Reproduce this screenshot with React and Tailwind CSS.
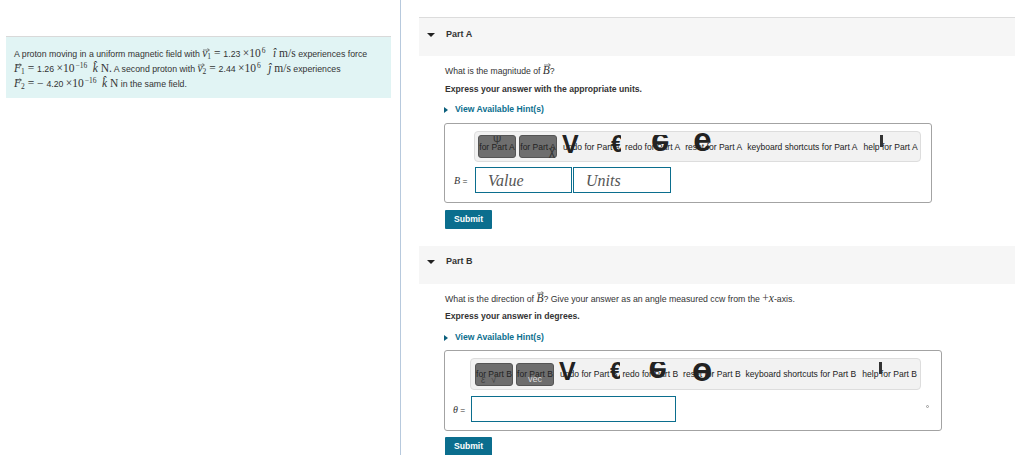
import React from 'react';

const serif = 'font-["Liberation_Serif",serif] italic';

function Vec({ children, arrow = 'top-[2px]' }) {
  return (
    <span className="relative inline-block font-['Liberation_Serif',serif] italic text-[11.5px]">
      <svg className={`absolute left-[1px] ${arrow}`} width="7" height="4" viewBox="0 0 7 4">
        <path d="M0 2H6M4.5 0.5L6.5 2L4.5 3.5" fill="none" stroke="#555" strokeWidth="0.7" />
      </svg>
      {children}
    </span>
  );
}

function M({ children, className = '' }) {
  return <span className={`font-['Liberation_Serif',serif] text-[11.5px] ${className}`}>{children}</span>;
}

function Sub({ children }) {
  return <span className="relative top-[2px] font-['Liberation_Serif',serif] text-[7.5px]">{children}</span>;
}

function Exp({ children }) {
  return <span className="relative top-[-4px] ml-px mr-[3px] font-['Liberation_Serif',serif] text-[7.5px]">{children}</span>;
}

function Caret() {
  return <span className="block w-0 h-0 border-x-[4px] border-x-transparent border-t-[4px] border-t-[#222]" />;
}

function HintLink({ className }) {
  return (
    <div className={`flex items-center gap-[7px] ml-[25px] text-[8.65px] font-bold text-[#0b6e8e] ${className}`}>
      <span className="w-0 h-0 border-y-[3.5px] border-y-transparent border-l-[4px] border-l-[#0b5f7c]" />
      View Available Hint(s)
    </div>
  );
}

function GrayBtn({ children, overlay }) {
  return (
    <span className="relative flex items-center justify-center w-[38px] h-[23px] rounded-[3px] border border-[#555] bg-[#6e6e6e] text-[#222] text-[8.5px] whitespace-nowrap">
      {children}
      {overlay}
    </span>
  );
}

function BigGlyph({ children, className }) {
  return <span className={`absolute font-['Liberation_Sans',sans-serif] font-bold text-[#222] leading-none ${className}`}>{children}</span>;
}

function Toolbar({ part, isB }) {
  const f = `for Part ${part}`;
  return (
    <div className={`flex items-center rounded-[4px] border border-[#ddd] bg-[#f2f2f2] text-[8.55px] leading-[12px] text-[#222] whitespace-nowrap ${isB ? 'ml-[25px] w-[451px] h-[32px] pl-[4px]' : 'ml-[29px] w-[447px] h-[31px] pl-[3px]'}`}>
      <GrayBtn
        overlay={isB
          ? <span className="absolute left-[5px] top-[10px] text-[10px] text-[#444] italic">ε &nbsp;√</span>
          : <span className="absolute left-[14px] top-[-1px] text-[10px] text-[#333]">Ψ</span>}
      >
        {f}
      </GrayBtn>
      <span className="w-[3px]" />
      <GrayBtn
        overlay={isB
          ? <span className="absolute left-[11px] top-[9px] text-[9px] text-[#ddd]">vec</span>
          : <span className="absolute right-[1px] bottom-0 text-[12px] text-[#333] leading-none">χ</span>}
      >
        {f}
      </GrayBtn>
      <span className="relative ml-[6px]">
        <BigGlyph className="left-[-1px] top-[-9px] text-[25px]">V</BigGlyph>
        <BigGlyph className={`${isB ? 'left-[50px]' : 'left-[48px]'} top-[-9px] w-[10px] h-[22px] overflow-hidden text-[24px]`}>€</BigGlyph>
        undo {f}
      </span>
      <span className="relative ml-[5px]">
        <BigGlyph className="left-[26px] top-[-13px] text-[33px] -scale-y-100 [clip-path:inset(0_0_7px_0)]">e</BigGlyph>
        redo {f}
      </span>
      <span className="relative ml-[5px]">
        <BigGlyph className={isB ? 'left-[9px] top-[-15px] text-[33px]' : 'left-[8px] top-[-18px] text-[33px]'}>{isB ? 'ө' : 'e'}</BigGlyph>
        reset {f}
      </span>
      <span className="ml-[5px]">keyboard shortcuts {f}</span>
      <span className="relative ml-[6px]">
        <span className="absolute left-[17px] top-[-6px] w-[3px] h-[12px] bg-[#333]" />
        help {f}
      </span>
    </div>
  );
}

function Submit({ className }) {
  return (
    <button className={`block ml-[26px] w-[47px] h-[19px] rounded-[1px] bg-[#0b6e8e] text-white text-[8.65px] font-bold text-center ${className}`}>
      Submit
    </button>
  );
}

function PartHead({ name, pad }) {
  return (
    <div className={`flex items-start h-[38px] bg-[#f6f6f6] pl-[8px] gap-[11px] font-bold text-[9px] text-[#333] ${pad}`}>
      <span className="mt-[5px]"><Caret /></span>
      <span>Part {name}</span>
    </div>
  );
}

export default function App() {
  return (
    <div className="flex w-[1015px] h-[455px] overflow-hidden bg-white font-['Liberation_Sans',sans-serif] text-[#333]">
      <div className="w-[401px] shrink-0 border-r border-[#b7c9dd] pt-[36px] pl-[6px] pr-[9px]">
        <div className="h-[62px] border-t border-[#d9d9d9] bg-[#e1f4f4] pl-[8px] pt-[9px] text-[8.75px] text-[#333]">
          <div className="h-[15px] leading-[15px] whitespace-nowrap">
            A proton moving in a uniform magnetic field with <Vec>v</Vec><Sub>1</Sub><M> = </M>1.23 <M>×10</M><Exp>6</Exp> <M className="ml-[2px]"><i>î</i> m/s</M> experiences force
          </div>
          <div className="h-[15px] leading-[15px] whitespace-nowrap">
            <Vec>F</Vec><Sub>1</Sub><M> = </M>1.26 <M>×10</M><Exp>−16</Exp> <M><i>k̂</i> N.</M> A second proton with <Vec>v</Vec><Sub>2</Sub><M> = </M>2.44 <M>×10</M><Exp>6</Exp> <M className="ml-[2px]"><i>ĵ</i> m/s</M> experiences
          </div>
          <div className="h-[15px] leading-[15px] whitespace-nowrap">
            <Vec>F</Vec><Sub>2</Sub><M> = − </M>4.20 <M>×10</M><Exp>−16</Exp> <M><i>k̂</i> N</M> in the same field.
          </div>
        </div>
      </div>

      <div className="flex-1 pl-[18px] pt-[17px]">
        <div className="border-t border-[#dcdcdc]">
          <PartHead name="A" pad="pt-[10px]" />
          <p className="ml-[26px] mt-[8px] h-[13px] text-[8.65px] leading-[13px]">
            What is the magnitude of <Vec arrow="top-[-1px]">B</Vec>?
          </p>
          <p className="ml-[26px] mt-[6px] h-[13px] text-[8.65px] leading-[13px] font-bold">Express your answer with the appropriate units.</p>
          <HintLink className="mt-[7px] h-[13px]" />
          <div className="ml-[25px] mt-[7px] w-[488px] h-[80px] rounded-[3px] border border-[#a3a3a3] pt-[7px]">
            <Toolbar part="A" />
            <div className="flex items-center mt-[5px] ml-[9px] h-[26px]">
              <span className="w-[21px] text-[8.5px]"><i className="font-['Liberation_Serif',serif] text-[10px]">B</i> =</span>
              <div className={`flex items-center w-[97px] h-[26px] border border-[#0b6e8e] pl-[12px] pt-px text-[16px] text-[#555] ${serif}`}>Value</div>
              <div className={`flex items-center w-[98px] h-[26px] ml-px border border-[#0b6e8e] pl-[12px] pt-px text-[16px] text-[#555] ${serif}`}>Units</div>
            </div>
          </div>
          <Submit className="mt-[7px]" />
        </div>

        <div className="mt-[17px]">
          <PartHead name="B" pad="pt-[9px]" />
          <p className="ml-[26px] mt-[8px] h-[13px] text-[8.75px] leading-[13px] whitespace-nowrap">
            What is the direction of <Vec arrow="top-[-1px]">B</Vec>? Give your answer as an angle measured ccw from the <M>+<i>x</i></M>-axis.
          </p>
          <p className="ml-[26px] mt-[5px] h-[13px] text-[8.65px] leading-[13px] font-bold">Express your answer in degrees.</p>
          <HintLink className="mt-[8px] h-[13px]" />
          <div className="relative ml-[25px] mt-[6px] w-[498px] h-[81px] rounded-[3px] border border-[#a3a3a3] pt-[7px]">
            <Toolbar part="B" isB />
            <div className="flex items-center mt-[6px] ml-[8px] h-[26px]">
              <span className="w-[18px] text-[8.5px]"><i className="font-['Liberation_Serif',serif] text-[10px]">θ</i> =</span>
              <div className="w-[205px] h-[26px] border border-[#0b6e8e]" />
            </div>
            <span className="absolute right-[12px] top-[54px] w-[3px] h-[3px] rounded-full border border-[#999]" />
          </div>
          <Submit className="mt-[6px]" />
        </div>
      </div>
    </div>
  );
}
